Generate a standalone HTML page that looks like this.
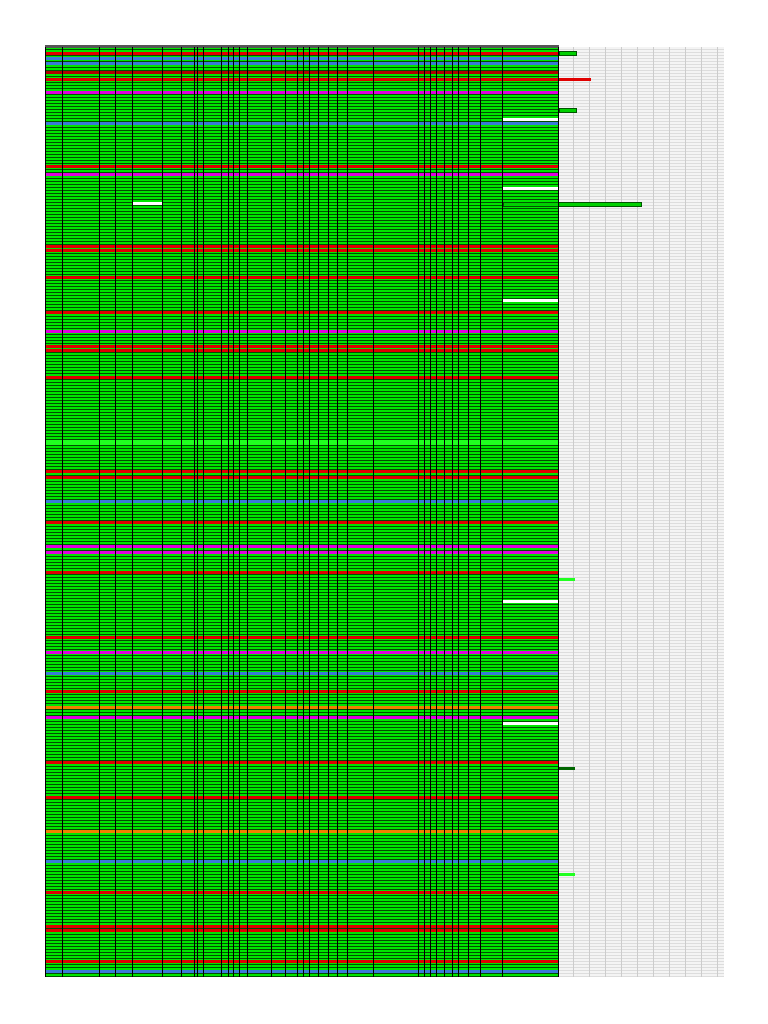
<!DOCTYPE html>
<html><head><meta charset="utf-8"><style>
html,body{margin:0;padding:0;background:#fff;width:768px;height:1024px;overflow:hidden;font-family:"Liberation Sans",sans-serif}
#rg{position:absolute;left:558px;top:47px;width:166px;height:930px;
background:repeating-linear-gradient(90deg,transparent 0 15px,#ccc 15px 16px),repeating-linear-gradient(180deg,#f4f4f4 0 2px,#ddd 2px 3px)}
#g{position:absolute;left:45px;top:47px;width:514px;height:930px;
background:repeating-linear-gradient(180deg,#00e600 0 2px,#005000 2px 3px)}
.c{position:absolute;top:47px;height:930px;width:1px;background:#000}
.r{position:absolute;left:45px;width:514px;height:3px}
.red{background:#e00000}.mag{background:#e000e0}.blu{background:#3a7ad8}.lg{background:#20ff20}.wh{background:#fff}.or{background:#f08000}.dr{background:#b00000}
#hd{position:absolute;left:45px;top:45px;width:514px;height:3px;background:#555}
</style></head><body>
<div id="rg"></div>
<div id="g"></div>
<div id="hd"></div>
<div class="r red" style="top:52px"></div>
<div class="r blu" style="top:57px"></div>
<div class="r blu" style="top:62px"></div>
<div class="r dr" style="top:71px"></div>
<div class="r red" style="top:78px;width:546px"></div>
<div class="r mag" style="top:91px"></div>
<div class="r blu" style="top:122px"></div>
<div class="r red" style="top:165px"></div>
<div class="r mag" style="top:173px"></div>
<div class="r red" style="top:245px"></div>
<div class="r red" style="top:249px"></div>
<div class="r red" style="top:276px"></div>
<div class="r red" style="top:311px"></div>
<div class="r mag" style="top:330px"></div>
<div class="r red" style="top:345px"></div>
<div class="r red" style="top:349px"></div>
<div class="r red" style="top:376px"></div>
<div class="r lg" style="top:440px;height:5px"></div>
<div class="r red" style="top:470px"></div>
<div class="r red" style="top:476px"></div>
<div class="r blu" style="top:500px"></div>
<div class="r red" style="top:521px"></div>
<div class="r mag" style="top:545px"></div>
<div class="r mag" style="top:551px"></div>
<div class="r red" style="top:571px"></div>
<div class="r red" style="top:636px"></div>
<div class="r mag" style="top:651px"></div>
<div class="r blu" style="top:672px"></div>
<div class="r red" style="top:690px"></div>
<div class="r or" style="top:706px"></div>
<div class="r mag" style="top:716px"></div>
<div class="r red" style="top:761px"></div>
<div class="r red" style="top:796px"></div>
<div class="r or" style="top:830px"></div>
<div class="r blu" style="top:860px"></div>
<div class="r red" style="top:891px"></div>
<div class="r red" style="top:925px"></div>
<div class="r red" style="top:929px"></div>
<div class="r red" style="top:960px"></div>
<div class="r blu" style="top:970px"></div>
<div class="r wh" style="top:118px;left:503px;width:55px"></div>
<div class="r wh" style="top:187px;left:503px;width:55px"></div>
<div class="r wh" style="top:299px;left:503px;width:55px"></div>
<div class="r wh" style="top:600px;left:503px;width:55px"></div>
<div class="r wh" style="top:722px;left:503px;width:55px"></div>
<div class="r wh" style="top:202px;left:132px;width:30px"></div>
<div class="r" style="top:202px;left:503px;width:137px;background:#00d000;border:1px solid #050"></div>
<div class="r" style="top:51px;left:559px;width:16px;background:#00d000;border:1px solid #050"></div>
<div class="r" style="top:108px;left:559px;width:16px;background:#00d000;border:1px solid #050"></div>
<div class="r" style="top:767px;left:559px;width:16px;background:#060"></div>
<div class="r" style="top:578px;left:559px;width:16px;background:#20ff20"></div>
<div class="r" style="top:873px;left:559px;width:16px;background:#20ff20"></div>
<div class="c" style="left:45px"></div><div class="c" style="left:62px"></div><div class="c" style="left:99px"></div>
<div class="c" style="left:115px"></div><div class="c" style="left:132px"></div><div class="c" style="left:162px"></div>
<div class="c" style="left:181px"></div><div class="c" style="left:194px"></div><div class="c" style="left:197px"></div>
<div class="c" style="left:203px"></div><div class="c" style="left:221px"></div><div class="c" style="left:228px"></div>
<div class="c" style="left:233px"></div><div class="c" style="left:239px"></div><div class="c" style="left:247px"></div>
<div class="c" style="left:271px"></div><div class="c" style="left:285px"></div><div class="c" style="left:297px"></div>
<div class="c" style="left:303px"></div><div class="c" style="left:309px"></div><div class="c" style="left:318px"></div>
<div class="c" style="left:328px"></div><div class="c" style="left:337px"></div><div class="c" style="left:347px"></div>
<div class="c" style="left:373px"></div><div class="c" style="left:418px"></div><div class="c" style="left:424px"></div>
<div class="c" style="left:430px"></div><div class="c" style="left:436px"></div><div class="c" style="left:444px"></div>
<div class="c" style="left:452px"></div><div class="c" style="left:458px"></div><div class="c" style="left:468px"></div>
<div class="c" style="left:480px"></div><div class="c" style="left:502px"></div><div class="c" style="left:558px"></div>
</body></html>
